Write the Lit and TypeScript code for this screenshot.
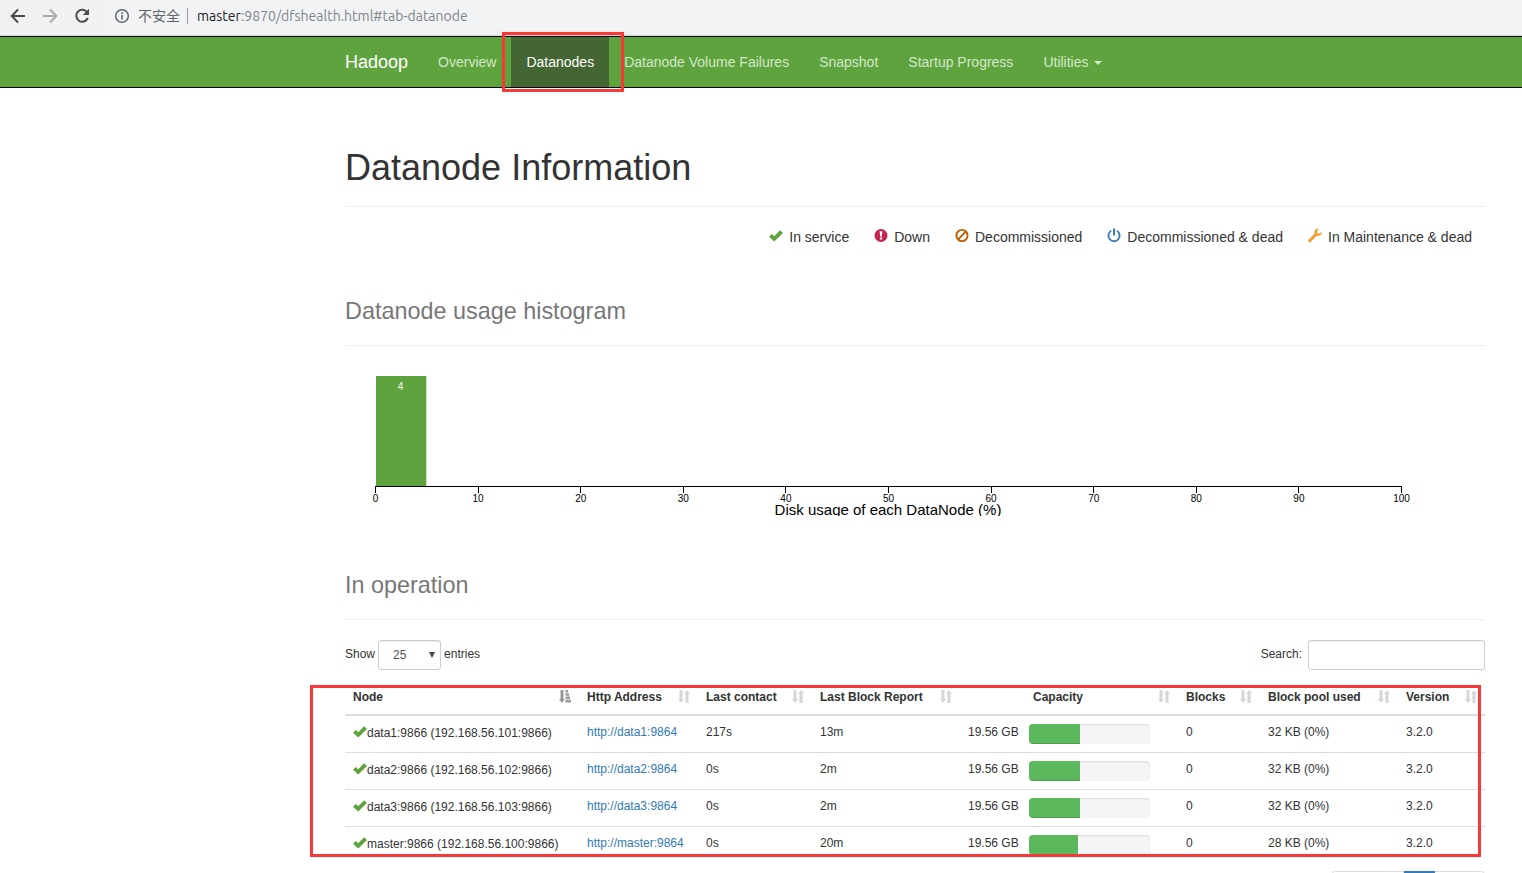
import { LitElement, html, svg, css } from "lit";
import { customElement, state } from "lit/decorators.js";

interface DataNode {
  name: string;
  address: string;
  http: string;
  lastContact: string;
  blockReport: string;
  capacity: string;
  used: number;
  blocks: number;
  pool: string;
  version: string;
}

const nodes: DataNode[] = [
  { name: "data1:9866", address: "192.168.56.101:9866", http: "http://data1:9864", lastContact: "217s", blockReport: "13m", capacity: "19.56 GB", used: 42.4, blocks: 0, pool: "32 KB (0%)", version: "3.2.0" },
  { name: "data2:9866", address: "192.168.56.102:9866", http: "http://data2:9864", lastContact: "0s", blockReport: "2m", capacity: "19.56 GB", used: 42.4, blocks: 0, pool: "32 KB (0%)", version: "3.2.0" },
  { name: "data3:9866", address: "192.168.56.103:9866", http: "http://data3:9864", lastContact: "0s", blockReport: "2m", capacity: "19.56 GB", used: 42.4, blocks: 0, pool: "32 KB (0%)", version: "3.2.0" },
  { name: "master:9866", address: "192.168.56.100:9866", http: "http://master:9864", lastContact: "0s", blockReport: "20m", capacity: "19.56 GB", used: 40.5, blocks: 0, pool: "28 KB (0%)", version: "3.2.0" },
];

const columns = [
  { label: "Node", width: 234 },
  { label: "Http Address", width: 119 },
  { label: "Last contact", width: 114 },
  { label: "Last Block Report", width: 148 },
  { label: "Capacity", width: 218 },
  { label: "Blocks", width: 82 },
  { label: "Block pool used", width: 138 },
  { label: "Version", width: 87 },
];

const icons = {
  check: svg`<path fill="#5fa33f" d="M0 7.8 2.9 5 5.2 7.200 11.100 1.200 14 3.900 5.300 12.400Z"/>`,
  down: svg`<circle cx="7" cy="6.500" r="6.500" fill="#c7254e"/><path fill="#fff" d="M5.700 2.300h2.600L7.900 7.500H6.100zM5.900 8.500h2.200v2.100H5.900z"/>`,
  ban: svg`<circle cx="7" cy="6.500" r="5.600" fill="none" stroke="#bc5f04" stroke-width="1.900"/><path d="M3.200 10.300 10.800 2.700" stroke="#bc5f04" stroke-width="1.900"/>`,
  power: svg`<path d="M4.200 1.800A5.600 5.600 0 1 0 9.800 1.800" fill="none" stroke="#3a7ab8" stroke-width="1.900"/><path d="M7 -.5v7" stroke="#3a7ab8" stroke-width="2"/>`,
  wrench: svg`<path fill="#eea236" d="M13.600 2.700 11.300 4.500 9.300 4 9 2.100 11 -.1C9.300-.6 7.500.100 6.700 1.500 6.200 2.500 6.200 3.500 6.600 4.500L.6 10.700C-.1 11.500 0 12.500.6 13c.7.6 1.600.5 2.300-.2L8.800 6.800c1.200.4 2.600.2 3.600-.6 1.100-.9 1.500-2.200 1.200-3.500z"/>`,
};

const legend = [
  { icon: icons.check, label: "In service" },
  { icon: icons.down, label: "Down" },
  { icon: icons.ban, label: "Decommissioned" },
  { icon: icons.power, label: "Decommissioned & dead" },
  { icon: icons.wrench, label: "In Maintenance & dead" },
];

const glyph = (shape: unknown) =>
  html`<svg class="glyph" viewBox="0 0 14 14" aria-hidden="true">${shape}</svg>`;

@customElement("browser-bar")
export class BrowserBar extends LitElement {
  static styles = css`
    :host {
      display: flex;
      align-items: center;
      height: 36px;
      box-sizing: border-box;
      padding: 0 0 4px 8px;
      background: #f2f1f0;
      border-bottom: 1px solid #d4d3d2;
    }
    .tool {
      display: flex;
      width: 32px;
      padding: 0;
      border: 0;
      background: none;
    }
    .tool svg { width: 20px; height: 20px; }
    .address {
      display: flex;
      flex: 1;
      align-items: center;
      height: 28px;
      box-sizing: border-box;
      padding-left: 10px;
      border-radius: 14px 0 0 14px;
      background: #f1f3f4;
      color: #80868b;
      font: 14px/20px Ubuntu, "Noto Sans", "Noto Sans CJK SC", sans-serif;
    }
    .info { width: 16px; height: 16px; margin-right: 8px; }
    .security {
      padding: 0 7px 2px 0;
      border-right: 1px solid #9a9da1;
      margin-right: 9px;
      color: #5f6368;
      line-height: 14px;
      font-family: "Noto Sans CJK SC", sans-serif;
    }
    .host { color: #202124; }
  `;

  render() {
    return html`
      <button class="tool" aria-label="Back">
        <svg viewBox="0 0 20 20" fill="none" stroke="#4a4a4a" stroke-width="2"><path d="M17 10H4M10 3.500 3.700 10l6.300 6.500"/></svg>
      </button>
      <button class="tool" aria-label="Forward">
        <svg viewBox="0 0 20 20" fill="none" stroke="#aaa9a8" stroke-width="2"><path d="M3 10h13M10 3.500 16.300 10 10 16.500"/></svg>
      </button>
      <button class="tool" aria-label="Reload">
        <svg viewBox="0 0 20 20"><path d="M15.300 6.500A6 6 0 1 0 15.800 12" fill="none" stroke="#4a4a4a" stroke-width="2"/><path d="M17 2.800V9h-6.200z" fill="#4a4a4a"/></svg>
      </button>
      <div class="address">
        <svg class="info" viewBox="0 0 16 16"><circle cx="8" cy="8" r="6.300" fill="none" stroke="#5f6368" stroke-width="1.500"/><path d="M7.200 7h1.600v4.500H7.200zM7.200 4.300h1.600v1.600H7.200z" fill="#5f6368"/></svg>
        <span class="security">不安全</span>
        <span><span class="host">master</span>:9870/dfshealth.html#tab-datanode</span>
      </div>
    `;
  }
}

@customElement("usage-histogram")
export class UsageHistogram extends LitElement {
  static styles = css`
    :host { display: block; }
    .chart { display: block; width: 100%; font-family: "Liberation Sans", Arial, sans-serif; }
    .tick { font-size: 10px; text-anchor: middle; }
    .count { fill: #fff; }
    .caption { font-size: 15px; text-anchor: middle; }
    .axis { fill: none; stroke: #000; shape-rendering: crispEdges; }
  `;

  render() {
    const ticks = Array.from({ length: 11 }, (_, i) => i * 10);
    const x = (value: number) => 30.5 + value * 10.26;
    return html`
      <svg class="chart" viewBox="0 0 1140 150" role="img" aria-label="Disk usage of each DataNode">
        <rect x="31" y="10" width="50.300" height="110" fill="#5fa33f"></rect>
        <text class="tick count" x="55.500" y="24">4</text>
        <path class="axis" d="M30.500 126.500V120.500H1056.500V126.500"></path>
        ${ticks.map(
          (t) => svg`
            <path class="axis" d="M${x(t)} 120.500v6"></path>
            <text class="tick" x=${x(t)} y="136">${t}</text>`
        )}
        <text class="caption" x="543" y="149">Disk usage of each DataNode (%)</text>
      </svg>
    `;
  }
}

@customElement("app-root")
export class AppRoot extends LitElement {
  @state() private query = "";

  static styles = css`
    :host {
      display: block;
      height: 100vh;
      overflow: hidden;
      background: #fff;
      color: #333;
      font: 14px/20px "Liberation Sans", Arial, sans-serif;
    }
    a { color: #337ab7; text-decoration: none; }
    .navbar {
      display: flex;
      padding-left: 345px;
      border: solid #080808;
      border-width: 1px 0;
      background: #5fa33f;
    }
    .brand {
      padding: 15px 15px 15px 0;
      color: #fff;
      font-size: 18px;
    }
    .menu { display: flex; margin: 0; padding: 0; list-style: none; }
    .item { position: relative; }
    .link { display: block; padding: 15px; color: #d2e8c8; white-space: nowrap; }
    .active .link { background: #446633; color: #fff; }
    .caret {
      display: inline-block;
      margin-left: 2px;
      border: 4px solid transparent;
      border-top-color: currentColor;
      border-bottom: 0;
      vertical-align: middle;
    }
    .mark { position: absolute; border: 3px solid #fb3838; pointer-events: none; }
    .mark-tab { inset: -5px -15px -5px -9px; z-index: 1; }
    .mark-table { inset: 4px 4px 6px -35px; }
    .content { padding: 0 37px 0 345px; }
    .title, .section {
      border-bottom: 1px solid #eee;
      font-weight: 400;
      font-size: 36px;
      line-height: 39px;
    }
    .title { margin: 60px 0 20px; padding-bottom: 19px; }
    .section { margin: 40px 0 20px; padding-bottom: 19px; }
    .section small { color: #777; font-size: 65%; line-height: 1; }
    .histogram { margin-bottom: 45px; }
    .legend {
      display: flex;
      justify-content: flex-end;
      gap: 25px;
      margin: 0;
      padding: 0 13px 0 0;
      list-style: none;
    }
    .key { display: flex; gap: 6px; }
    .glyph { width: 14px; height: 14px; flex: none; overflow: visible; }
    .key .glyph { margin-top: 2px; }
    .panel { font-size: 12px; line-height: 17px; }
    .controls { display: flex; justify-content: space-between; }
    .control { display: flex; align-items: center; gap: 3px; }
    .control label { padding-bottom: 2px; }
    .field {
      height: 30px;
      box-sizing: border-box;
      border: 1px solid #ccc;
      border-radius: 3px;
      background: #fff;
      box-shadow: inset 0 1px 1px rgba(0, 0, 0, 0.075);
      color: #555;
      font: inherit;
    }
    .picker { display: grid; align-items: center; }
    .picker > * { grid-area: 1 / 1; }
    .length { width: 63px; padding: 0 14px; appearance: none; }
    .arrow { justify-self: end; width: 6px; height: 6px; margin-right: 6px; fill: #444; pointer-events: none; }
    .search { gap: 6px; }
    .query { width: 177px; padding: 5px 10px; }
    .table-area { position: relative; margin-top: 11px; }
    .nodes { width: 100%; table-layout: fixed; border-collapse: collapse; }
    .nodes th, .nodes td { padding: 8px; text-align: left; vertical-align: top; white-space: nowrap; }
    .nodes th { border-bottom: 2px solid #ddd; }
    .nodes td { border-top: 1px solid #ddd; }
    .head { display: flex; justify-content: space-between; height: 17px; }
    .head-capacity .label { flex: 1; text-align: center; padding-right: 10px; }
    .sort { width: 12px; height: 14px; margin-top: 1px; fill: #d6d6d6; flex: none; }
    .sorted { fill: #999; }
    .node { display: flex; align-items: center; height: 19px; }
    .node .glyph { margin-bottom: 4px; }
    .capacity { display: grid; grid-template-columns: 51px 1fr; gap: 10px; padding-right: 20px; }
    .bar {
      height: 20px;
      overflow: hidden;
      border-radius: 4px;
      background: #f5f5f5;
      box-shadow: inset 0 1px 2px rgba(0, 0, 0, 0.1);
    }
    .fill { height: 100%; background: #5cb85c; box-shadow: inset 0 -1px 0 rgba(0, 0, 0, 0.15); }
    .pages { display: flex; justify-content: flex-end; margin-top: 8px; }
    .page { padding: 6px 12px; border: 1px solid #ddd; border-left-width: 0; background: #fff; color: #777; font: inherit; }
    .page:first-child { border-left-width: 1px; border-radius: 4px 0 0 4px; }
    .page:last-child { border-radius: 0 4px 4px 0; }
    .page.current { border-color: #337ab7; background: #337ab7; color: #fff; }
  `;

  private onSearch(e: Event) {
    this.query = (e.target as HTMLInputElement).value;
  }

  private sortIcon(first: boolean) {
    return first
      ? html`<svg class="sort sorted" viewBox="0 0 12 14" aria-hidden="true"><path d="M1.500 0h3v9h1.500l-3 4-3-4h1.500zM6.500 0h2.500v2.500H6.500zM6.500 3.200h3.500v2.500H6.500zM6.500 6.400h4.500v2.600H6.500zM6.500 9.700h5.500v2.800H6.500z"/></svg>`
      : html`<svg class="sort" viewBox="0 0 12 14" aria-hidden="true"><path d="M1.500 0h3v9H6l-3 4-3-4h1.500zM7.500 13h3V4H12L9 0 6 4h1.500z"/></svg>`;
  }

  render() {
    const rows = nodes.filter((n) => `${n.name} ${n.address}`.includes(this.query));
    return html`
      <browser-bar></browser-bar>
      <nav class="navbar">
        <a class="brand" href="#">Hadoop</a>
        <ul class="menu">
          <li class="item"><a class="link" href="#overview">Overview</a></li>
          <li class="item active"><a class="link" href="#datanode">Datanodes</a><div class="mark mark-tab"></div></li>
          <li class="item"><a class="link" href="#volume-failures">Datanode Volume Failures</a></li>
          <li class="item"><a class="link" href="#snapshot">Snapshot</a></li>
          <li class="item"><a class="link" href="#startup-progress">Startup Progress</a></li>
          <li class="item"><a class="link" href="#utilities">Utilities <span class="caret"></span></a></li>
        </ul>
      </nav>
      <main class="content">
        <h1 class="title">Datanode Information</h1>
        <ul class="legend">
          ${legend.map((k) => html`<li class="key">${glyph(k.icon)}<span>${k.label}</span></li>`)}
        </ul>
        <h2 class="section"><small>Datanode usage histogram</small></h2>
        <usage-histogram class="histogram"></usage-histogram>
        <h2 class="section"><small>In operation</small></h2>
        <div class="panel">
          <div class="controls">
            <div class="control">
              <label for="length">Show</label>
              <span class="picker">
                <select id="length" class="field length"><option>25</option><option>50</option><option>100</option></select>
                <svg class="arrow" viewBox="0 0 6 6" aria-hidden="true"><path d="M0 0h6L3 6z"/></svg>
              </span>
              <label for="length">entries</label>
            </div>
            <div class="control search">
              <label for="query">Search:</label>
              <input id="query" class="field query" type="search" .value=${this.query} @input=${this.onSearch} />
            </div>
          </div>
          <div class="table-area">
            <table class="nodes">
              <colgroup>${columns.map((c) => html`<col style="width:${c.width / 11.4}%" />`)}</colgroup>
              <thead>
                <tr>
                  ${columns.map(
                    (c, i) => html`<th scope="col"><div class="head ${c.label === "Capacity" ? "head-capacity" : ""}"><span class="label">${c.label}</span>${this.sortIcon(i === 0)}</div></th>`
                  )}
                </tr>
              </thead>
              <tbody>
                ${rows.map(
                  (n) => html`<tr>
                    <td><div class="node">${glyph(icons.check)}<span>${n.name} (${n.address})</span></div></td>
                    <td><a href=${n.http}>${n.http}</a></td>
                    <td>${n.lastContact}</td>
                    <td>${n.blockReport}</td>
                    <td><div class="capacity"><span>${n.capacity}</span><div class="bar"><div class="fill" style="width:${n.used}%"></div></div></div></td>
                    <td>${n.blocks}</td>
                    <td>${n.pool}</td>
                    <td>${n.version}</td>
                  </tr>`
                )}
              </tbody>
            </table>
            <div class="mark mark-table"></div>
          </div>
          <div class="pages">
            <button class="page">Previous</button>
            <button class="page current">1</button>
            <button class="page">Next</button>
          </div>
        </div>
      </main>
    `;
  }
}
